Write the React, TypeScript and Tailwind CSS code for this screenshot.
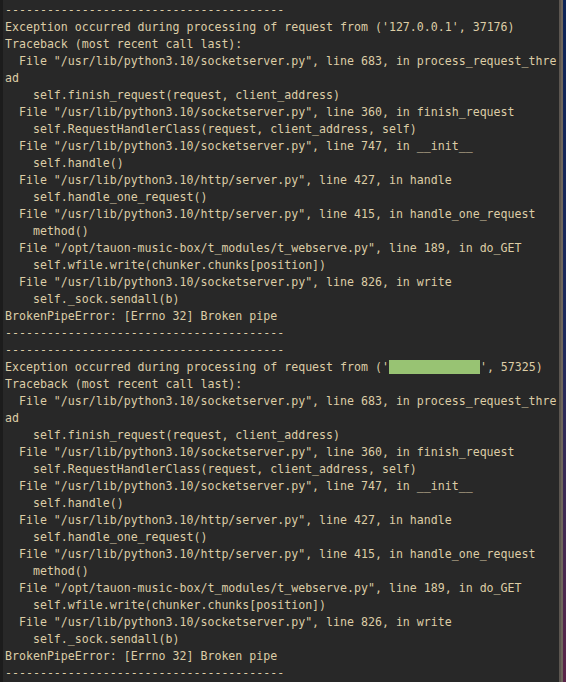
const dashes = '----------------------------------------'

const trace = [
  'Traceback (most recent call last):',
  '  File "/usr/lib/python3.10/socketserver.py", line 683, in process_request_thre',
  'ad',
  '    self.finish_request(request, client_address)',
  '  File "/usr/lib/python3.10/socketserver.py", line 360, in finish_request',
  '    self.RequestHandlerClass(request, client_address, self)',
  '  File "/usr/lib/python3.10/socketserver.py", line 747, in __init__',
  '    self.handle()',
  '  File "/usr/lib/python3.10/http/server.py", line 427, in handle',
  '    self.handle_one_request()',
  '  File "/usr/lib/python3.10/http/server.py", line 415, in handle_one_request',
  '    method()',
  '  File "/opt/tauon-music-box/t_modules/t_webserve.py", line 189, in do_GET',
  '    self.wfile.write(chunker.chunks[position])',
  '  File "/usr/lib/python3.10/socketserver.py", line 826, in write',
  '    self._sock.sendall(b)',
  'BrokenPipeError: [Errno 32] Broken pipe',
]

function Line({ children }: { children: React.ReactNode }) {
  return <div className="h-[17px] leading-[17px] whitespace-pre">{children}</div>
}

function Block({ from }: { from: React.ReactNode }) {
  return (
    <>
      <Line>{dashes}</Line>
      <Line>Exception occurred during processing of request from {from}</Line>
      {trace.map((t, i) => (
        <Line key={i}>{t}</Line>
      ))}
      <Line>{dashes}</Line>
    </>
  )
}

export default function App() {
  return (
    <div className="flex h-[682px] w-[566px] overflow-hidden bg-[#282828]">
      <div className="w-[3px] shrink-0 bg-[#1c1c1c]" />
      <div
        className="flex-1 pl-[2px] pt-[2px] text-[11.6px] text-[#ddcda6]"
        style={{ fontFamily: '"DejaVu Sans Mono", "Liberation Mono", monospace' }}
      >
        <Block from="('127.0.0.1', 37176)" />
        <Block
          from={
            <>
              ('<span className="inline-block h-[14px] w-[91px] bg-[#98c373] align-[-3px]" />', 57325)
            </>
          }
        />
      </div>
      <div className="flex w-[4px] shrink-0">
        <div className="w-[2px] bg-[#5c5650]" />
        <div className="w-[2px] bg-[#6e665c]" />
      </div>
      <div className="w-[3px] shrink-0 bg-gradient-to-b from-[#0d2456] via-[#1e2a5c] to-[#5a2448]" />
    </div>
  )
}
